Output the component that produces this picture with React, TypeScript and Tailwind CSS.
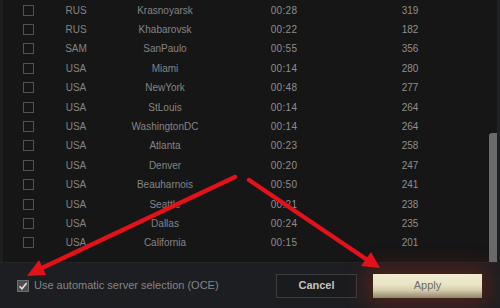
import React from 'react';

type Server = {
  region: string;
  city: string;
  time: string;
  ping: number;
};

const servers: Server[] = [
  { region: 'RUS', city: 'Krasnoyarsk', time: '00:28', ping: 319 },
  { region: 'RUS', city: 'Khabarovsk', time: '00:22', ping: 182 },
  { region: 'SAM', city: 'SanPaulo', time: '00:55', ping: 356 },
  { region: 'USA', city: 'Miami', time: '00:14', ping: 280 },
  { region: 'USA', city: 'NewYork', time: '00:48', ping: 277 },
  { region: 'USA', city: 'StLouis', time: '00:14', ping: 264 },
  { region: 'USA', city: 'WashingtonDC', time: '00:14', ping: 264 },
  { region: 'USA', city: 'Atlanta', time: '00:23', ping: 258 },
  { region: 'USA', city: 'Denver', time: '00:20', ping: 247 },
  { region: 'USA', city: 'Beauharnois', time: '00:50', ping: 241 },
  { region: 'USA', city: 'Seattle', time: '00:21', ping: 238 },
  { region: 'USA', city: 'Dallas', time: '00:24', ping: 235 },
  { region: 'USA', city: 'California', time: '00:15', ping: 201 },
];

const ServerRow = ({ server }: { server: Server }) => (
  <div className="flex items-center h-[19.4px] pt-[1px] text-[10px] text-[#848484]">
    <div className="pl-[20px]">
      <div className="w-[11px] h-[11px] border border-[#525252]" />
    </div>
    <div className="w-[84px] text-center">{server.region}</div>
    <div className="w-[94px] text-center whitespace-nowrap">{server.city}</div>
    <div className="w-[144px] text-center tracking-[0.3px] text-[#8e8e8e]">{server.time}</div>
    <div className="w-[108px] text-center text-[#8e8e8e]">{server.ping}</div>
  </div>
);

// red annotation arrows drawn over the dialog
const Arrows = () => (
  <svg className="absolute inset-0 pointer-events-none" width="500" height="308" viewBox="0 0 500 308">
    <g stroke="#e3121a" strokeWidth="4.5" strokeLinecap="round">
      <line x1="235" y1="177" x2="42" y2="268" />
      <line x1="249" y1="180" x2="366" y2="259" />
    </g>
    <g fill="#e3121a">
      <polygon points="27,276 46,275 39,260" />
      <polygon points="380,268 361,266 371,252" />
    </g>
  </svg>
);

export default function App() {
  return (
    <div
      className="relative w-[500px] h-[308px] overflow-hidden bg-[#161616]"
      style={{ fontFamily: '"Liberation Sans", Arial, sans-serif' }}
    >
      {/* Server list */}
      <div className="flex h-[262px] border-l-[3px] border-[#1d1e20]">
        <div className="flex-1 flex flex-col">
          {servers.map((s) => (
            <ServerRow key={s.city} server={s} />
          ))}
        </div>
        <div className="w-[12px] flex flex-col items-start pl-[1px] border-r-[3px] border-[#1f2022]">
          <div className="mt-[133px] w-[8px] flex-1 bg-[#6b6b6b] rounded-tl-[3px]" />
        </div>
      </div>

      {/* Footer */}
      <div className="h-[46px] flex items-center justify-between bg-[#1d1e21] border-t border-[#232427] pl-[17px] pr-[18px]">
        <div className="flex items-center gap-[5px]">
          <div className="w-[12px] h-[12px] bg-[#4e4e4e] border border-[#6e6e6e] flex items-center justify-center">
            <svg width="10" height="10" viewBox="0 0 10 10">
              <path d="M1.5 5.2 L4 7.8 L8.6 2" fill="none" stroke="#e0e0e0" strokeWidth="1.6" />
            </svg>
          </div>
          <span className="text-[11px] text-[#858585]">Use automatic server selection (OCE)</span>
        </div>
        <div className="flex items-center gap-[16px]">
          <button className="w-[81px] h-[24px] bg-[#1a1b1d] border border-[#3c3d40] text-[11px] font-bold text-[#c2c2c2]">
            Cancel
          </button>
          <button className="w-[109px] h-[24px] text-[11px] text-[#6e6c64] bg-[linear-gradient(180deg,#f0ead0_0%,#e9e3c6_45%,#d4ccab_68%,#8e846a_100%)] shadow-[0_0_22px_6px_rgba(150,40,20,0.45)]">
            Apply
          </button>
        </div>
      </div>

      <Arrows />
    </div>
  );
}
